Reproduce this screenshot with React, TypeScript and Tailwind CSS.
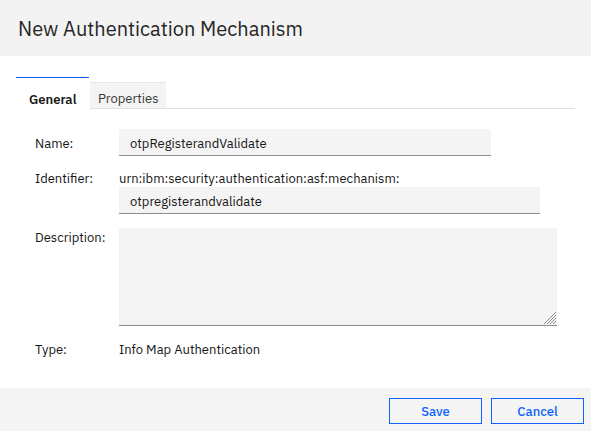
import React from "react";

export default function App() {
  return (
    <div
      className="w-[591px] h-[431px] flex flex-col bg-white text-[#161616] overflow-hidden"
      style={{ fontFamily: '"IBM Plex Sans", "Noto Sans", sans-serif' }}
    >
      <div className="h-[56px] shrink-0 bg-[#f3f3f3] flex items-center pl-[18px]">
        <h1 className="text-[20px] font-normal leading-none text-[#262626] mt-[1px]">
          New Authentication Mechanism
        </h1>
      </div>

      <div className="flex-1 flex flex-col">
        <div className="mt-[21px] ml-[16px] mr-[16px] flex items-end h-[32px]">
          <div className="w-[73px] h-[32px] border-t border-[#0f62fe] flex items-start pl-[13px] pt-[14px]">
            <span className="text-[13px] leading-[16px] font-semibold">General</span>
          </div>
          <div className="ml-[1px] w-[76px] h-[27px] bg-[#f4f4f4] border-t border-[#e8e8e8] border-b border-b-[#e0e0e0] flex items-start pl-[8px] pt-[8px]">
            <span className="text-[13px] leading-[16px] text-[#393939]">Properties</span>
          </div>
          <div className="flex-1 border-b border-[#e0e0e0]" />
        </div>

        <div className="pl-[35px] mt-[20px] flex flex-col text-[13px]">
          <div className="flex items-center">
            <div className="w-[84px] pt-[3px]">Name:</div>
            <input
              readOnly
              defaultValue="otpRegisterandValidate"
              className="w-[372px] h-[27px] bg-[#f4f4f4] border-b border-[#8d8d8d] pl-[11px] pt-[3px] text-[13px] text-[#161616] outline-none"
            />
          </div>

          <div className="flex mt-[15px]">
            <div className="w-[84px] leading-[16px]">Identifier:</div>
            <div className="flex flex-col">
              <div className="leading-[16px]">urn:ibm:security:authentication:asf:mechanism:</div>
              <input
                readOnly
                defaultValue="otpregisterandvalidate"
                className="w-[421px] h-[27px] bg-[#f4f4f4] border-b border-[#8d8d8d] pl-[11px] pt-[2px] text-[13px] text-[#161616] outline-none"
              />
            </div>
          </div>

          <div className="flex mt-[14px]">
            <div className="w-[84px] pt-[2px] leading-[16px]">Description:</div>
            <div className="relative w-[438px] h-[98px]">
              <textarea
                readOnly
                className="block w-full h-full bg-[#f4f4f4] border-b border-[#8d8d8d] outline-none resize-none"
              />
              <svg
                className="absolute right-[1px] bottom-[2px]"
                width="12"
                height="12"
                viewBox="0 0 12 12"
                stroke="#8d8d8d"
                strokeWidth="1"
              >
                <line x1="12" y1="0" x2="0" y2="12" />
                <line x1="12" y1="3" x2="3" y2="12" />
                <line x1="12" y1="6" x2="6" y2="12" />
                <line x1="12" y1="9" x2="9" y2="12" />
              </svg>
            </div>
          </div>

          <div className="flex mt-[16px] leading-[16px]">
            <div className="w-[84px]">Type:</div>
            <div>Info Map Authentication</div>
          </div>
        </div>
      </div>

      <div className="h-[43px] shrink-0 bg-[#f4f4f4] flex items-start justify-end pt-[10px] pr-[7px] gap-[9px]">
        <button className="w-[93px] h-[26px] border border-[#0f62fe] text-[#0f62fe] text-[13px] font-medium flex items-center justify-center pt-[1px]">
          Save
        </button>
        <button className="w-[93px] h-[26px] border border-[#0f62fe] text-[#0f62fe] text-[13px] font-medium flex items-center justify-center pt-[1px]">
          Cancel
        </button>
      </div>
    </div>
  );
}
